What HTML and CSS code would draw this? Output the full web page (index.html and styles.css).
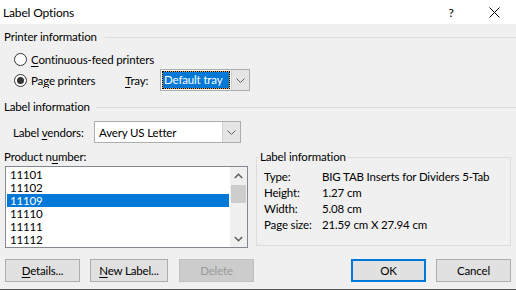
FILE: index.html
```html
<!DOCTYPE html>
<html lang="en">
<head>
    <meta charset="UTF-8">
    <title>Label Options</title>
    <link rel="stylesheet" href="styles.css">
</head>
<body>
    <div class="window">
        <div class="titlebar">
            <span class="title">Label Options</span>
            <span class="help">?</span>
            <span class="close">
                <svg width="11" height="11" viewBox="0 0 11 11"><path d="M0.5 0.5L10.5 10.5M10.5 0.5L0.5 10.5" stroke="#000" stroke-width="1" fill="none"/></svg>
            </span>
        </div>

        <div class="dialog">
            <div class="section-head">
                <span>Printer information</span>
                <i class="rule"></i>
            </div>
            <div class="radio-row first">
                <span class="radio"></span>
                <span><u>C</u>ontinuous-feed printers</span>
            </div>
            <div class="radio-row second">
                <span class="radio checked"></span>
                <span class="radio-text">Pa<u>g</u>e printers</span>
                <span class="tray-label"><u>T</u>ray:</span>
                <div class="combo tray">
                    <span class="combo-value"><span class="focus">Default tray</span></span>
                    <span class="combo-btn">
                        <svg width="9" height="5" viewBox="0 0 9 5"><path d="M0.5 0.5L4.5 4.5L8.5 0.5" stroke="#606060" fill="none"/></svg>
                    </span>
                </div>
            </div>

            <div class="section-head second-head">
                <span>Label information</span>
                <i class="rule"></i>
            </div>
            <div class="vendor-row">
                <span class="vendor-label">Label <u>v</u>endors:</span>
                <div class="combo vendor">
                    <span class="combo-value plain">Avery US Letter</span>
                    <span class="combo-btn">
                        <svg width="9" height="5" viewBox="0 0 9 5"><path d="M0.5 0.5L4.5 4.5L8.5 0.5" stroke="#606060" fill="none"/></svg>
                    </span>
                </div>
            </div>

            <div class="lower">
                <div class="product">
                    <div class="product-label">Product n<u>u</u>mber:</div>
                    <div class="listbox">
                        <div class="items">
                            <div class="item">11101</div>
                            <div class="item">11102</div>
                            <div class="item selected">11109</div>
                            <div class="item">11110</div>
                            <div class="item">11111</div>
                            <div class="item">11112</div>
                        </div>
                        <div class="scrollbar">
                            <span class="arrow">
                                <svg width="9" height="6" viewBox="0 0 9 6"><path d="M0.8 5L4.5 1.3L8.2 5" stroke="#606060" stroke-width="1.6" fill="none"/></svg>
                            </span>
                            <span class="thumb"></span>
                            <span class="track"></span>
                            <span class="arrow">
                                <svg width="9" height="6" viewBox="0 0 9 6"><path d="M0.8 1L4.5 4.7L8.2 1" stroke="#606060" stroke-width="1.6" fill="none"/></svg>
                            </span>
                        </div>
                    </div>
                </div>

                <fieldset class="info">
                    <legend>Label information</legend>
                    <div class="info-grid">
                        <span>Type:</span><span>BIG TAB Inserts for Dividers 5-Tab</span>
                        <span>Height:</span><span>1.27 cm</span>
                        <span>Width:</span><span>5.08 cm</span>
                        <span>Page size:</span><span>21.59 cm X 27.94 cm</span>
                    </div>
                </fieldset>
            </div>

            <div class="buttons">
                <button class="btn"><u>D</u>etails...</button>
                <button class="btn new"><u>N</u>ew Label...</button>
                <button class="btn disabled">Delete</button>
                <span class="spacer"></span>
                <button class="btn default">OK</button>
                <button class="btn">Cancel</button>
            </div>
        </div>
    </div>
</body>
</html>
```

FILE: styles.css
```css
* {
    box-sizing: border-box;
}
body {
    margin: 0;
    font-family: Lato, "Noto Sans", sans-serif;
    font-size: 11.5px;
    letter-spacing: -0.15px;
    color: #000;
    background: #f0f0f0;
    white-space: nowrap;
}
u {
    text-decoration-thickness: 1px;
    text-underline-offset: 2px;
}
.window {
    width: 516px;
    height: 290px;
    display: flex;
    flex-direction: column;
    overflow: hidden;
    background: #f0f0f0;
    border-bottom: 1px solid #555;
}
.titlebar {
    height: 24px;
    flex-shrink: 0;
    display: flex;
    align-items: center;
    background: #fff;
    padding-left: 3px;
}
.title {
    flex: 1;
    font-size: 12px;
}
.help {
    width: 42px;
    text-align: center;
    font-size: 12px;
}
.close {
    width: 44px;
    display: flex;
    justify-content: center;
}
.dialog {
    flex: 1;
    padding-top: 6px;
}
.section-head {
    display: flex;
    align-items: center;
    height: 14px;
    line-height: 14px;
    padding-left: 4px;
}
.section-head .rule {
    flex: 1;
    height: 1px;
    margin-left: 8px;
    background: #dcdcdc;
}
.second-head {
    margin-top: 9px;
}
.second-head .rule {
    margin-left: 6px;
}
.radio-row {
    display: flex;
    align-items: center;
    padding-left: 14px;
}
.radio-row.first {
    height: 18px;
    margin-top: 6px;
}
.radio-row.second {
    height: 22px;
    margin-top: 1px;
}
.radio {
    width: 13px;
    height: 13px;
    margin-right: 4px;
    border: 1px solid #333;
    border-radius: 50%;
    background: #fff;
    display: flex;
    align-items: center;
    justify-content: center;
}
.radio.checked::after {
    content: "";
    width: 7px;
    height: 7px;
    border-radius: 50%;
    background: #333;
}
.radio-text {
    width: 94px;
}
.tray-label {
    width: 35px;
}
.combo {
    display: flex;
    height: 22px;
    border: 1px solid #adadad;
    background: #fff;
}
.tray {
    width: 90px;
}
.combo-value {
    flex: 1;
    display: flex;
    padding: 1px;
}
.combo-value.plain {
    align-items: center;
    padding-left: 4px;
}
.focus {
    flex: 1;
    line-height: 16px;
    padding-left: 1px;
    color: #fff;
    background: #0078d7;
    border: 1px solid #f0a030;
    outline: 1px dotted #000;
    outline-offset: -1px;
}
.combo-btn {
    width: 18px;
    display: flex;
    align-items: center;
    justify-content: center;
    background: #e5e5e5;
    border-left: 1px solid #d0d0d0;
}
.vendor-row {
    display: flex;
    align-items: center;
    margin-top: 7px;
    padding-left: 13px;
}
.vendor-label {
    width: 81px;
}
.vendor {
    width: 147px;
}
.lower {
    display: flex;
    gap: 8px;
    margin-top: 7px;
    padding-left: 4px;
}
.product {
    width: 244px;
}
.product-label {
    height: 14px;
    line-height: 14px;
}
.listbox {
    display: flex;
    width: 243px;
    height: 82px;
    margin: 2px 0 0 1px;
    border: 1px solid #828790;
    background: #fff;
}
.items {
    flex: 1;
    padding: 1px 1px 0 1px;
}
.item {
    height: 13px;
    line-height: 13px;
    padding-left: 3px;
}
.item.selected {
    color: #fff;
    background: #0078d7;
}
.scrollbar {
    width: 17px;
    display: flex;
    flex-direction: column;
    background: #f0f0f0;
}
.arrow {
    height: 17px;
    display: flex;
    align-items: center;
    justify-content: center;
}
.thumb {
    height: 18px;
    margin: 1px 1px 0;
    background: #cdcdcd;
}
.track {
    flex: 1;
}
.info {
    width: 255px;
    height: 96px;
    margin: 0;
    padding: 0 0 0 7px;
    border: 1px solid #dcdcdc;
}
.info legend {
    margin-left: -5px;
    padding: 0 1px;
    line-height: 14px;
}
.info-grid {
    display: grid;
    grid-template-columns: 58px auto;
    margin-top: 5px;
    line-height: 16px;
}
.buttons {
    display: flex;
    gap: 10px;
    margin-top: 11px;
    padding: 0 5px;
}
.btn {
    width: 75px;
    height: 23px;
    padding: 0;
    font-family: inherit;
    font-size: inherit;
    letter-spacing: inherit;
    color: #000;
    background: #e1e1e1;
    border: 1px solid #adadad;
}
.btn.new {
    width: 78px;
    margin-right: 1px;
}
.btn.disabled {
    color: #9a9a9a;
    background: #cccccc;
    border-color: #bfbfbf;
}
.btn.default {
    border: 2px solid #0078d7;
}
.spacer {
    flex: 1;
}
```
